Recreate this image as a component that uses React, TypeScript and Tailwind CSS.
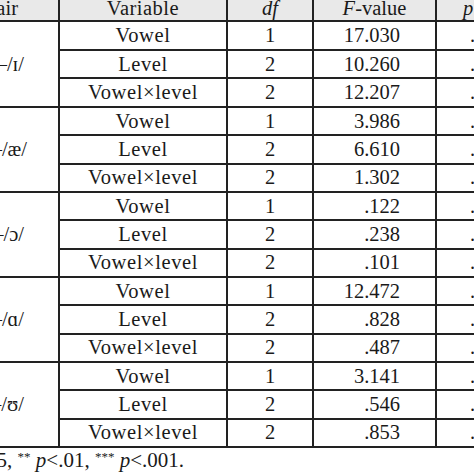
import React from 'react';

type Row = { variable: string; df: string; f: string; p: string };
type Group = { pair: string; pr: string; rows: Row[]; h: string };

const groups: Group[] = [
  {
    pair: '/iː/–/ɪ/',
    pr: 'pr-[34px]',
    h: 'h-[86px]',
    rows: [
      { variable: 'Vowel', df: '1', f: '17.030', p: '.000' },
      { variable: 'Level', df: '2', f: '10.260', p: '.000' },
      { variable: 'Vowel×level', df: '2', f: '12.207', p: '.000' },
    ],
  },
  {
    pair: '/e/–/æ/',
    pr: 'pr-[31px]',
    h: 'h-[85px]',
    rows: [
      { variable: 'Vowel', df: '1', f: '3.986', p: '.046' },
      { variable: 'Level', df: '2', f: '6.610', p: '.001' },
      { variable: 'Vowel×level', df: '2', f: '1.302', p: '.272' },
    ],
  },
  {
    pair: '/ɔː/–/ɔ/',
    pr: 'pr-[34px]',
    h: 'h-[85px]',
    rows: [
      { variable: 'Vowel', df: '1', f: '.122', p: '.727' },
      { variable: 'Level', df: '2', f: '.238', p: '.788' },
      { variable: 'Vowel×level', df: '2', f: '.101', p: '.904' },
    ],
  },
  {
    pair: '/ʌ/–/ɑ/',
    pr: 'pr-[34px]',
    h: 'h-[85px]',
    rows: [
      { variable: 'Vowel', df: '1', f: '12.472', p: '.000' },
      { variable: 'Level', df: '2', f: '.828', p: '.437' },
      { variable: 'Vowel×level', df: '2', f: '.487', p: '.615' },
    ],
  },
  {
    pair: '/uː/–/ʊ/',
    pr: 'pr-[34px]',
    h: 'h-[85px]',
    rows: [
      { variable: 'Vowel', df: '1', f: '3.141', p: '.077' },
      { variable: 'Level', df: '2', f: '.546', p: '.579' },
      { variable: 'Vowel×level', df: '2', f: '.853', p: '.427' },
    ],
  },
];

const line = 'border-[#222]';

export default function App() {
  return (
    <div
      className="w-[474px] h-[474px] overflow-hidden bg-white text-[#1a1a1a] text-[20.5px]"
      style={{ fontFamily: '"Liberation Serif", "DejaVu Serif", serif' }}
    >
      {/* header */}
      <div className={`flex h-[22px] bg-[#e9e9e9] border-b-2 ${line} leading-[16px]`}>
        <div className={`w-[60px] shrink-0 flex justify-end pr-[40px] border-r-2 ${line} whitespace-nowrap`}>
          Pair
        </div>
        <div className={`w-[168px] shrink-0 text-center tracking-[0.5px] border-r-2 ${line}`}>Variable</div>
        <div className={`w-[86px] shrink-0 text-center border-r-2 ${line}`}>
          <i>df</i>
        </div>
        <div className={`w-[123px] shrink-0 text-center border-r-2 ${line}`}>
          <i>F</i>-value
        </div>
        <div className="flex-1 pl-[26px] whitespace-nowrap">
          <i>p</i>
        </div>
      </div>

      {/* body */}
      {groups.map((g) => (
        <div key={g.pair} className={`flex ${g.h} border-b-2 ${line}`}>
          <div
            className={`w-[60px] shrink-0 flex items-center justify-end ${g.pr} border-r-2 ${line} whitespace-nowrap leading-[23px]`}
          >
            {g.pair}
          </div>
          <div className="flex-1 flex flex-col">
            {g.rows.map((r, i) => (
              <div
                key={r.variable}
                className={`flex flex-1 min-h-0 leading-[23px] ${i < 2 ? `border-b-2 ${line}` : ''}`}
              >
                <div
                  className={`w-[168px] shrink-0 flex items-center justify-center tracking-[0.6px] border-r-2 ${line}`}
                >
                  {r.variable}
                </div>
                <div className={`w-[86px] shrink-0 flex items-center justify-center border-r-2 ${line}`}>
                  {r.df}
                </div>
                <div className={`w-[123px] shrink-0 flex items-center justify-end pr-[35px] border-r-2 ${line}`}>
                  {r.f}
                </div>
                <div className="flex-1 flex items-center pl-[33px] whitespace-nowrap">{r.p}</div>
              </div>
            ))}
          </div>
        </div>
      ))}

      {/* note */}
      <div className="w-[184px] flex justify-end whitespace-nowrap text-[21px] leading-[24px]">
        <span>
          <i>Note</i>. <sup className="text-[13px]">*</sup> <i>p</i>&lt;.05,{' '}
          <sup className="text-[13px]">**</sup>&nbsp;<i>p</i>&lt;.01,{' '}
          <sup className="text-[13px]">***</sup>&nbsp;<i>p</i>&lt;.001.
        </span>
      </div>
    </div>
  );
}
